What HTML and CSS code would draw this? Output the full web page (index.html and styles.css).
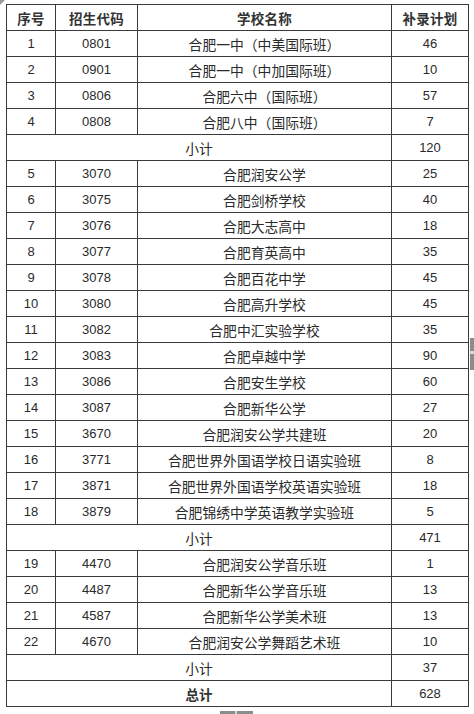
FILE: index.html
```html
<!DOCTYPE html>
<html lang="zh">
<head>
<meta charset="utf-8">
<link rel="stylesheet" href="styles.css">
</head>
<body>
<div class="page">
<span class="corner"></span>
<table class="plan">
<colgroup><col class="c1"><col class="c2"><col class="c3"><col class="c4"></colgroup>
<thead>
<tr class="head"><th>序号</th><th>招生代码</th><th>学校名称</th><th>补录计划</th></tr>
</thead>
<tbody>
<tr><td class="num">1</td><td class="num">0801</td><td class="name">合肥一中（中美国际班）</td><td class="num">46</td></tr>
<tr><td class="num">2</td><td class="num">0901</td><td class="name">合肥一中（中加国际班）</td><td class="num">10</td></tr>
<tr><td class="num">3</td><td class="num">0806</td><td class="name">合肥六中（国际班）</td><td class="num">57</td></tr>
<tr><td class="num">4</td><td class="num">0808</td><td class="name">合肥八中（国际班）</td><td class="num">7</td></tr>
<tr><td class="name" colspan="3">小计</td><td class="num">120</td></tr>
<tr><td class="num">5</td><td class="num">3070</td><td class="name">合肥润安公学</td><td class="num">25</td></tr>
<tr><td class="num">6</td><td class="num">3075</td><td class="name">合肥剑桥学校</td><td class="num">40</td></tr>
<tr><td class="num">7</td><td class="num">3076</td><td class="name">合肥大志高中</td><td class="num">18</td></tr>
<tr><td class="num">8</td><td class="num">3077</td><td class="name">合肥育英高中</td><td class="num">35</td></tr>
<tr><td class="num">9</td><td class="num">3078</td><td class="name">合肥百花中学</td><td class="num">45</td></tr>
<tr><td class="num">10</td><td class="num">3080</td><td class="name">合肥高升学校</td><td class="num">45</td></tr>
<tr><td class="num">11</td><td class="num">3082</td><td class="name">合肥中汇实验学校</td><td class="num">35</td></tr>
<tr><td class="num">12</td><td class="num">3083</td><td class="name">合肥卓越中学</td><td class="num">90</td></tr>
<tr><td class="num">13</td><td class="num">3086</td><td class="name">合肥安生学校</td><td class="num">60</td></tr>
<tr><td class="num">14</td><td class="num">3087</td><td class="name">合肥新华公学</td><td class="num">27</td></tr>
<tr><td class="num">15</td><td class="num">3670</td><td class="name">合肥润安公学共建班</td><td class="num">20</td></tr>
<tr><td class="num">16</td><td class="num">3771</td><td class="name">合肥世界外国语学校日语实验班</td><td class="num">8</td></tr>
<tr><td class="num">17</td><td class="num">3871</td><td class="name">合肥世界外国语学校英语实验班</td><td class="num">18</td></tr>
<tr><td class="num">18</td><td class="num">3879</td><td class="name">合肥锦绣中学英语教学实验班</td><td class="num">5</td></tr>
<tr><td class="name" colspan="3">小计</td><td class="num">471</td></tr>
<tr><td class="num">19</td><td class="num">4470</td><td class="name">合肥润安公学音乐班</td><td class="num">1</td></tr>
<tr><td class="num">20</td><td class="num">4487</td><td class="name">合肥新华公学音乐班</td><td class="num">13</td></tr>
<tr><td class="num">21</td><td class="num">4587</td><td class="name">合肥新华公学美术班</td><td class="num">13</td></tr>
<tr><td class="num">22</td><td class="num">4670</td><td class="name">合肥润安公学舞蹈艺术班</td><td class="num">10</td></tr>
<tr><td class="name" colspan="3">小计</td><td class="num">37</td></tr>
<tr><td class="total" colspan="3">总计</td><td class="num">628</td></tr>
</tbody>
</table>
<span class="handle-right"></span>
<span class="handle-bottom"></span>
</div>
</body>
</html>
```
FILE: styles.css
```css
html, body {
  margin: 0;
  padding: 0;
  background: #ffffff;
}
.page {
  position: relative;
  width: 474px;
  height: 714px;
  overflow: hidden;
  padding: 4px 0 0 6px;
  box-sizing: border-box;
}
.plan {
  border-collapse: collapse;
  table-layout: fixed;
  width: 462px;
  color: #2a2a2a;
  font-family: "Liberation Sans", "Noto Sans CJK SC", sans-serif;
}
.c1 { width: 49px; }
.c2 { width: 82px; }
.c3 { width: 254px; }
.c4 { width: 77px; }
.plan th,
.plan td {
  border: 1px solid #3a3a3a;
  height: 25px;
  padding: 0;
  text-align: center;
  vertical-align: middle;
  line-height: 16px;
}
.plan th {
  font-family: "Noto Sans CJK SC", sans-serif;
  font-weight: 700;
  font-size: 13.5px;
  color: #333333;
  letter-spacing: 0.2px;
}
.num {
  font-size: 13px;
}
.name {
  font-family: "Noto Sans CJK SC", sans-serif;
  font-size: 13.8px;
  font-weight: 400;
}
.total {
  font-family: "Noto Sans CJK SC", sans-serif;
  font-size: 13.5px;
  font-weight: 700;
  color: #333333;
}
.corner {
  position: absolute;
  left: 0;
  top: 0;
  width: 0;
  height: 0;
  border-top: 5px solid #9a9a9a;
  border-right: 5px solid transparent;
}
.handle-right {
  position: absolute;
  right: 0;
  top: 338px;
  width: 4px;
  height: 32px;
  background: linear-gradient(#8c8c8c 0 13px, #d8d8d8 13px 16px, #8c8c8c 16px);
}
.handle-bottom {
  position: absolute;
  left: 220px;
  bottom: 0;
  width: 33px;
  height: 3px;
  background: linear-gradient(90deg, #8c8c8c 0 15px, #d8d8d8 15px 17px, #8c8c8c 17px);
}
```
